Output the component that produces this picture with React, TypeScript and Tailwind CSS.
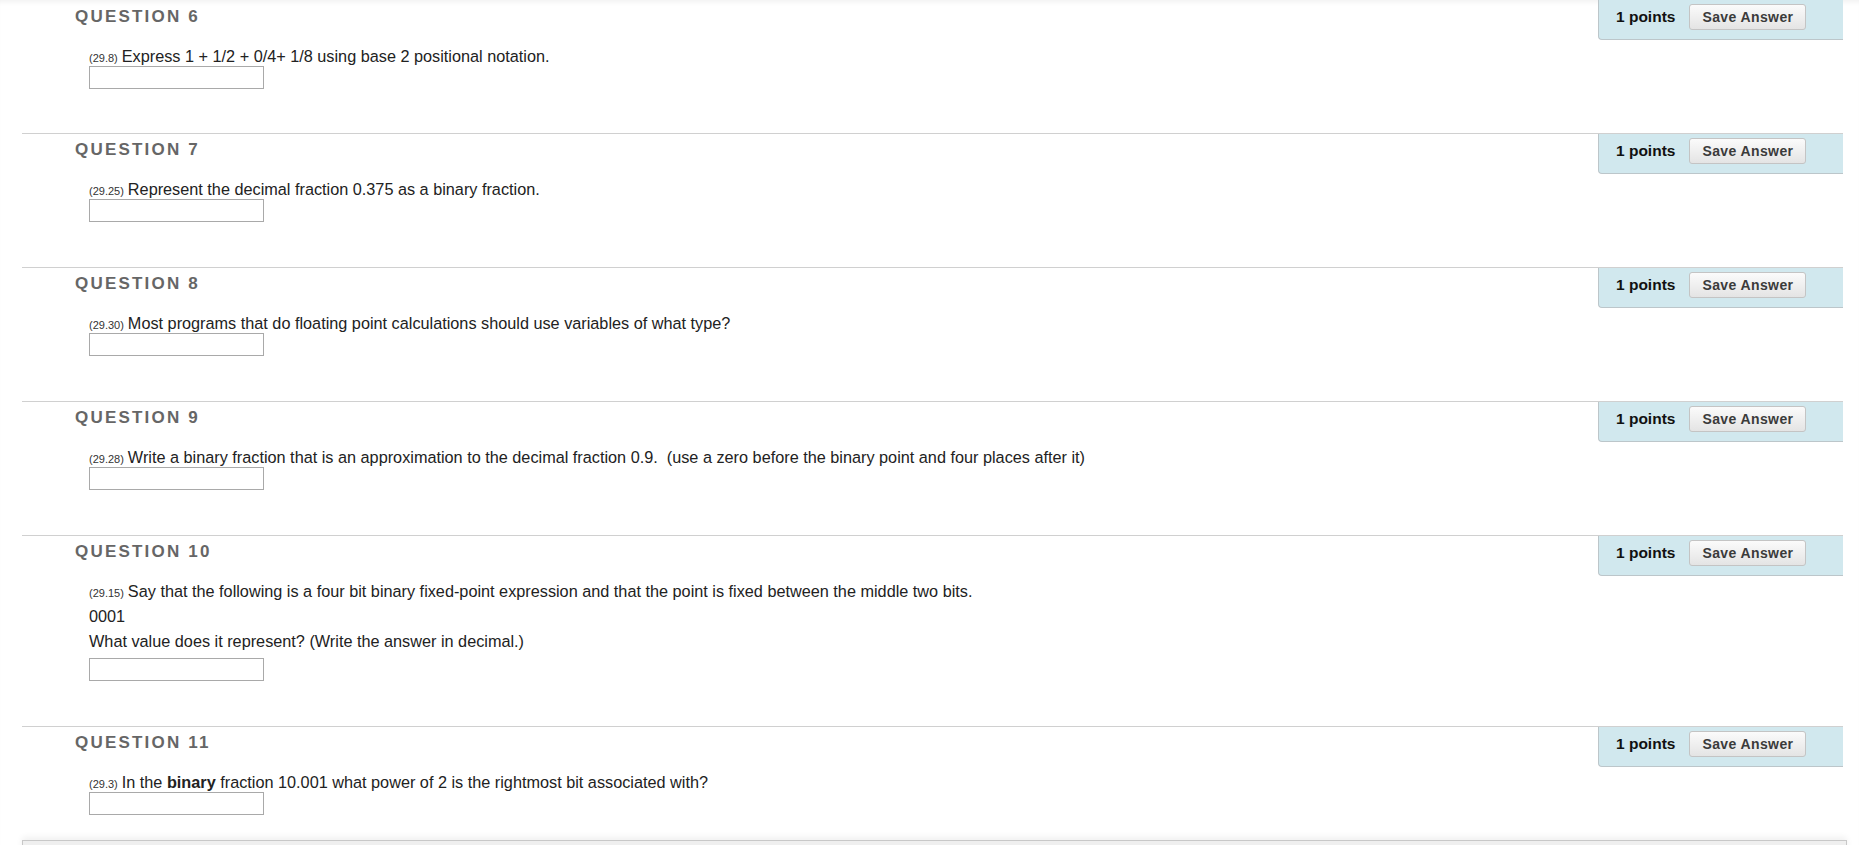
import React from 'react';

interface Question {
  num: number;
  ref: string;
  lines: React.ReactNode[];
}

const questions: Question[] = [
  { num: 6, ref: '(29.8)', lines: ['Express 1 + 1/2 + 0/4+ 1/8 using base 2 positional notation.'] },
  { num: 7, ref: '(29.25)', lines: ['Represent the decimal fraction 0.375 as a binary fraction.'] },
  {
    num: 8,
    ref: '(29.30)',
    lines: ['Most programs that do floating point calculations should use variables of what type?'],
  },
  {
    num: 9,
    ref: '(29.28)',
    lines: [
      'Write a binary fraction that is an approximation to the decimal fraction 0.9.\u00a0 (use a zero before the binary point and four places after it)',
    ],
  },
  {
    num: 10,
    ref: '(29.15)',
    lines: [
      'Say that the following is a four bit binary fixed-point expression and that the point is fixed between the middle two bits.',
      '0001',
      'What value does it represent? (Write the answer in decimal.)',
    ],
  },
  {
    num: 11,
    ref: '(29.3)',
    lines: [
      <>
        In the <b className="font-bold">binary</b> fraction 10.001 what power of 2 is the rightmost bit
        associated with?
      </>,
    ],
  },
];

function PointsBox() {
  return (
    <div className="flex h-[40px] w-[245px] shrink-0 items-start rounded-bl-[4px] border-b border-l border-[#bcc6ca] bg-[#d1e8ee] pl-[17px] pt-[4px]">
      <div className="flex items-center">
        <span className="text-[15.5px] font-bold text-[#111]">1 points</span>
        <button className="ml-[14px] h-[26px] w-[117px] rounded-[3px] border border-[#c4c4c4] bg-gradient-to-b from-[#fbfbfb] to-[#e4e4e4] text-[14px] font-bold tracking-[0.4px] text-[#3b3b3b]">
          Save Answer
        </button>
      </div>
    </div>
  );
}

function QuestionBlock({ q, first, last }: { q: Question; first: boolean; last: boolean }) {
  const multi = q.lines.length > 1;
  const pad = first ? 'pt-[7px] pb-[44px]' : last ? 'pt-[6px] pb-[25px]' : 'pt-[6px] pb-[45px]';
  return (
    <div className={`flex border-t ${first ? '-mt-[1px] border-transparent' : 'border-[#d0d0d0]'}`}>
      <div className={`flex-1 pl-[53px] ${pad}`}>
        <h3 className="h-[20px] text-[17px] font-bold uppercase leading-[20px] tracking-[2.2px] text-[#666]">
          Question {q.num}
        </h3>
        <div className="mt-[19px] pl-[14px] text-[16.25px] leading-[20px] text-[#222]">
          {q.lines.map((line, i) => (
            <p key={i} className={`h-[20px] whitespace-nowrap ${i > 0 ? 'mt-[5px]' : ''}`}>
              {i === 0 && <span className="mr-[4px] text-[11px] leading-none text-[#333]">{q.ref}</span>}
              {line}
            </p>
          ))}
          <input
            type="text"
            className={`block h-[23px] w-[175px] border border-[#a9a9a9] bg-white ${multi ? 'mt-[7px]' : ''}`}
          />
        </div>
      </div>
      <PointsBox />
    </div>
  );
}

export default function App() {
  return (
    <div
      className="h-[845px] overflow-hidden bg-white shadow-[inset_0_5px_5px_-3px_rgba(0,0,0,0.06)]"
      style={{ fontFamily: '"Liberation Sans", Arial, sans-serif' }}
    >
      <div className="pl-[22px] pr-[16px]">
        {questions.map((q, i) => (
          <QuestionBlock key={q.num} q={q} first={i === 0} last={i === questions.length - 1} />
        ))}
      </div>
      <div className="ml-[22px] mr-[12px] h-[20px] border-l border-r border-t border-[#c8c8c8] bg-[#efefef] shadow-[0_-3px_6px_rgba(0,0,0,0.06)]" />
    </div>
  );
}
